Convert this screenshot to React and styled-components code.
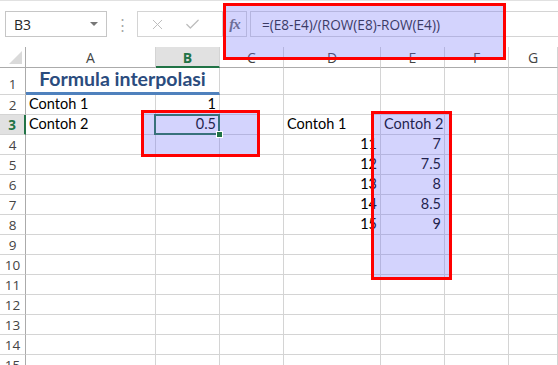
import React from 'react';
import styled, { createGlobalStyle, css } from 'styled-components';
import { X, Check } from 'lucide-react';

const GlobalStyle = createGlobalStyle`
    body {
        margin: 0;
        background: #ffffff;
        font-family: "Lato", "Open Sans", sans-serif;
        overflow: hidden;
    }
`;

const COLUMNS = ['A', 'B', 'C', 'D', 'E', 'F', 'G'];

const ROWS = {
    2: { A: 'Contoh 1', B: 1 },
    3: { A: 'Contoh 2', B: 0.5, D: 'Contoh 1', E: 'Contoh 2' },
    4: { D: 11, E: 7 },
    5: { D: 12, E: 7.5 },
    6: { D: 13, E: 8 },
    7: { D: 14, E: 8.5 },
    8: { D: 15, E: 9 },
};

const ROW_COUNT = 15;

export default function App() {
    const rows = [];
    for (let r = 2; r <= ROW_COUNT; r++) rows.push(r);

    return (
        <Page>
            <GlobalStyle />
            <TopBar>
                <NameBox>
                    <span>B3</span>
                    <DropArrow />
                </NameBox>
                <Dots>⋮</Dots>
                <ButtonGroup>
                    <X size={17} strokeWidth={1.4} color="#bdbdbd" />
                    <Check size={17} strokeWidth={1.8} color="#bdbdbd" />
                </ButtonGroup>
                <FxBox>fx</FxBox>
                <FormulaInput>=(E8-E4)/(ROW(E8)-ROW(E4))</FormulaInput>
            </TopBar>

            <Sheet>
                <Corner><CornerTriangle /></Corner>
                {COLUMNS.map(col => (
                    <ColHeader key={col} $active={col === 'B'}>{col}</ColHeader>
                ))}

                <RowHeader $tall>1</RowHeader>
                <TitleCell>Formula interpolasi</TitleCell>
                {COLUMNS.slice(2).map(col => <Cell key={col} $tall />)}

                {rows.map(r => (
                    <React.Fragment key={r}>
                        <RowHeader $active={r === 3}>{r}</RowHeader>
                        {COLUMNS.map(col => {
                            const value = ROWS[r] && ROWS[r][col];
                            const numeric = typeof value === 'number';
                            return (
                                <Cell
                                    key={col}
                                    $right={numeric}
                                    $selected={r === 3 && col === 'B'}
                                >
                                    {value}
                                </Cell>
                            );
                        })}
                    </React.Fragment>
                ))}
            </Sheet>

            <Highlight style={{ left: 223, top: 3, width: 283, height: 57 }} />
            <Highlight style={{ left: 141, top: 110, width: 119, height: 47 }} />
            <Highlight style={{ left: 371, top: 111, width: 81, height: 169 }} />
        </Page>
    );
}

const Page = styled.div`
    position: relative;
    width: 558px;
    height: 365px;
    overflow: hidden;
`;

const TopBar = styled.div`
    display: flex;
    align-items: flex-start;
    box-sizing: border-box;
    height: 47px;
    padding: 10px 0 0 5px;
    border-top: 1px solid #e1e1e1;
    font-family: "Open Sans", "Noto Sans", sans-serif;
`;

const NameBox = styled.div`
    display: flex;
    align-items: center;
    justify-content: space-between;
    box-sizing: border-box;
    width: 102px;
    height: 26px;
    padding: 0 8px 0 8px;
    border: 1px solid #c6c6c6;
    font-size: 14px;
    color: #262626;
`;

const DropArrow = styled.span`
    width: 0;
    height: 0;
    border-left: 4px solid transparent;
    border-right: 4px solid transparent;
    border-top: 4px solid #777777;
`;

const Dots = styled.div`
    width: 30px;
    height: 26px;
    display: flex;
    align-items: center;
    justify-content: center;
    color: #a8a8a8;
    font-size: 15px;
`;

const ButtonGroup = styled.div`
    display: flex;
    align-items: center;
    gap: 18px;
    box-sizing: border-box;
    width: 85px;
    height: 26px;
    padding: 0 0 0 11px;
    border: 1px solid #d4d4d4;
    border-right: none;
`;

const FxBox = styled.div`
    display: flex;
    align-items: center;
    justify-content: center;
    box-sizing: border-box;
    width: 25px;
    height: 26px;
    border: 1px solid #d4d4d4;
    font-family: "Liberation Serif", serif;
    font-style: italic;
    font-weight: 700;
    font-size: 15px;
    letter-spacing: -1px;
    color: #6e6e6e;
`;

const FormulaInput = styled.div`
    flex: 1;
    display: flex;
    align-items: center;
    box-sizing: border-box;
    height: 26px;
    margin-left: 3px;
    padding-left: 11px;
    border: 1px solid #d4d4d4;
    border-right: none;
    font-size: 13.6px;
    color: #262626;
`;

const Sheet = styled.div`
    display: grid;
    grid-template-columns: 26px 130px 64px 64px 97px 64px 64px 1fr;
    grid-template-rows: 21px 27px repeat(14, 20px);
`;

const headerBase = css`
    display: flex;
    align-items: center;
    justify-content: center;
    box-sizing: border-box;
    font-family: "Open Sans", "Noto Sans", sans-serif;
    color: #444444;
`;

const Corner = styled.div`
    ${headerBase};
    position: relative;
    border-right: 1px solid #ababab;
    border-bottom: 1px solid #ababab;
`;

const CornerTriangle = styled.span`
    position: absolute;
    right: 3px;
    bottom: 3px;
    width: 0;
    height: 0;
    border-left: 13px solid transparent;
    border-bottom: 13px solid #dadada;
`;

const ColHeader = styled.div`
    ${headerBase};
    font-size: 14px;
    border-right: 1px solid #d4d4d4;
    border-bottom: 1px solid #ababab;
    ${props => props.$active && css`
        background: #e1e1e1;
        color: #217346;
        font-weight: 700;
        border-bottom: 2px solid #217346;
        padding-top: 1px;
    `}
`;

const RowHeader = styled.div`
    ${headerBase};
    font-size: 13.5px;
    border-right: 1px solid #ababab;
    border-bottom: 1px solid #d4d4d4;
    padding-top: ${props => props.$tall ? '6px' : '1px'};
    ${props => props.$active && css`
        background: #e1e1e1;
        color: #217346;
        font-weight: 700;
        border-right: 2px solid #217346;
    `}
`;

const Cell = styled.div`
    position: relative;
    display: flex;
    align-items: flex-end;
    justify-content: ${props => props.$right ? 'flex-end' : 'flex-start'};
    box-sizing: border-box;
    padding: 0 3px 1px 3px;
    border-right: 1px solid #d4d4d4;
    border-bottom: 1px solid #d4d4d4;
    font-size: 14.5px;
    line-height: 18px;
    color: #000000;
    white-space: nowrap;
    ${props => props.$selected && css`
        &::after {
            content: '';
            position: absolute;
            left: -2px;
            top: -1px;
            right: -1px;
            bottom: -1px;
            border: 2px solid #217346;
        }
        &::before {
            content: '';
            position: absolute;
            right: -4px;
            bottom: -4px;
            width: 5px;
            height: 5px;
            background: #217346;
            border: 1px solid #ffffff;
            z-index: 1;
        }
    `}
`;

const TitleCell = styled.div`
    grid-column: span 2;
    display: flex;
    align-items: flex-end;
    justify-content: center;
    box-sizing: border-box;
    padding-bottom: 2px;
    border-right: 1px solid #d4d4d4;
    border-bottom: 3px solid #4f81bd;
    font-size: 19.5px;
    font-weight: 700;
    color: #2b4c7e;
`;

const Highlight = styled.div`
    position: absolute;
    box-sizing: border-box;
    border: 3px solid #ff0000;
    background: rgba(110, 110, 250, 0.3);
    pointer-events: none;
`;
